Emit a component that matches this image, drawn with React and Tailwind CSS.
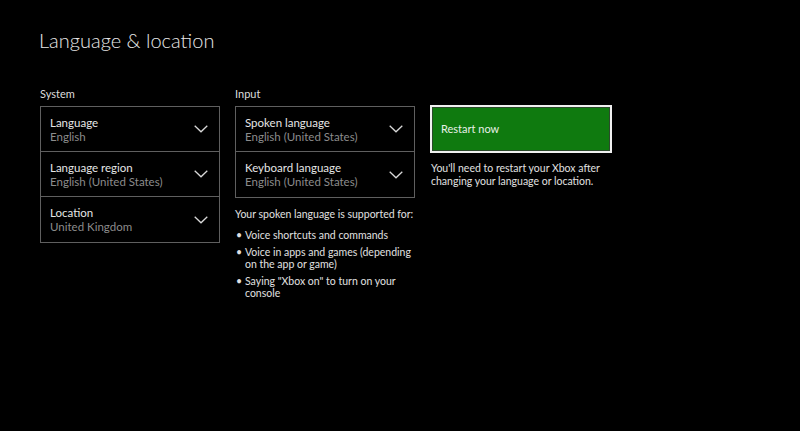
import React from "react";

const Chevron = () => (
  <svg width="14" height="8" viewBox="0 0 14 8" className="shrink-0">
    <path d="M0.7 0.7 L7 6.8 L13.3 0.7" fill="none" stroke="#d8d8d8" strokeWidth="1.3" />
  </svg>
);

const Row = ({ label, value, last }) => (
  <div className={`flex h-[45px] items-center justify-between pl-[9px] pr-[11px] ${last ? "" : "border-b border-[#5f5f5f]"}`}>
    <div className="flex flex-col leading-[14px] pt-[1px]">
      <span className="text-[11.5px] text-[#e6e6e6]">{label}</span>
      <span className="text-[11.5px] text-[#8c8c8c]">{value}</span>
    </div>
    <Chevron />
  </div>
);

export default function App() {
  return (
    <div className="w-[800px] h-[431px] bg-black overflow-hidden text-white" style={{ fontFamily: 'Lato, "Noto Sans", sans-serif' }}>
      <div className="pl-[39px] pt-[26px]">
        <h1 className="text-[20px] font-light leading-[28px] text-[#e8e8e8]">Language &amp; location</h1>
      </div>
      <div className="flex pl-[40px] pt-[33px] gap-[15px]">
        <div className="w-[180px]">
          <div className="text-[11px] text-[#dcdcdc] leading-[14px] h-[19px]">System</div>
          <div className="border border-[#5f5f5f]">
            <Row label="Language" value="English" />
            <Row label="Language region" value="English (United States)" />
            <Row label="Location" value="United Kingdom" last />
          </div>
        </div>
        <div className="w-[180px]">
          <div className="text-[11px] text-[#dcdcdc] leading-[14px] h-[19px]">Input</div>
          <div className="border border-[#5f5f5f]">
            <Row label="Spoken language" value="English (United States)" />
            <Row label="Keyboard language" value="English (United States)" last />
          </div>
          <div className="mt-[10px] text-[10.5px] leading-[12px] text-[#e0e0e0]">
            <div>Your spoken language is supported for:</div>
            <ul className="mt-[9px] flex flex-col gap-[5px] pl-[1px] w-[176px]">
              <li className="flex"><span className="w-[9px] shrink-0">•</span><span>Voice shortcuts and commands</span></li>
              <li className="flex"><span className="w-[9px] shrink-0">•</span><span>Voice in apps and games (depending on the app or game)</span></li>
              <li className="flex"><span className="w-[9px] shrink-0">•</span><span>Saying "Xbox on" to turn on your console</span></li>
            </ul>
          </div>
        </div>
        <div className="w-[182px] -mt-[1px]">
          <div className="h-[19px]" />
          <div className="h-[48px] border-2 border-[#f0f0f0] bg-[#0f7a0f] shadow-[inset_0_0_0_1px_#2a4a2a] flex items-center pl-[9px]">
            <span className="text-[11px] text-[#e8f0e8]">Restart now</span>
          </div>
          <div className="mt-[9px] text-[10.5px] leading-[13px] text-[#e0e0e0] pl-[1px]">
            You'll need to restart your Xbox after changing your language or location.
          </div>
        </div>
      </div>
    </div>
  );
}
